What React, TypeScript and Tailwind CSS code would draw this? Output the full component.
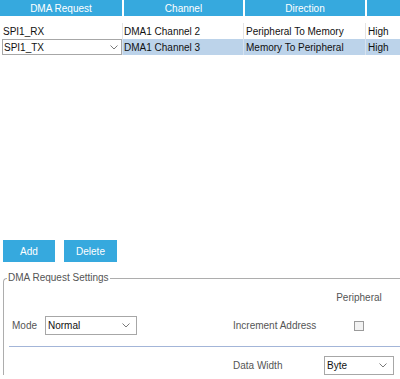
import React from 'react'

const font = { fontFamily: '"Liberation Sans", Arial, sans-serif' }

function Chevron() {
  return (
    <svg width="8" height="5" viewBox="0 0 8 5" className="shrink-0">
      <polyline points="0.5,0.5 4,4 7.5,0.5" fill="none" stroke="#7a7a7a" strokeWidth="1" />
    </svg>
  )
}

function Select({ value, width, className = '' }: { value: string; width: string; className?: string }) {
  return (
    <div
      className={`${width} h-[19px] flex items-center justify-between bg-white border border-[#a7a7a7] pl-[2px] pr-[6px] text-[10px] text-[#111] ${className}`}
    >
      <span>{value}</span>
      <Chevron />
    </div>
  )
}

const columns = ['DMA Request', 'Channel', 'Direction', '']

export default function App() {
  return (
    <div className="w-[400px] h-[379px] bg-white overflow-hidden" style={font}>
      {/* Table */}
      <div className="h-[240px]">
        <div className="grid grid-cols-[122px_119px_120px_1fr] gap-x-[2px] h-[16px]">
          {columns.map((c, i) => (
            <div key={i} className="bg-[#36a9de] text-white text-[10px] flex items-center justify-center">
              {c}
            </div>
          ))}
        </div>

        <div className="mt-[7px] grid grid-cols-[122px_121px_122px_1fr] h-[16px] text-[10px] text-[#111]">
          <div className="pl-[3px] flex items-center">SPI1_RX</div>
          <div className="pl-[1px] flex items-center border-l border-[#e4e4e4]">DMA1 Channel 2</div>
          <div className="pl-[2px] flex items-center border-l border-[#e4e4e4]">Peripheral To Memory</div>
          <div className="pl-[2px] flex items-center border-l border-[#e4e4e4]">High</div>
        </div>

        <div className="grid grid-cols-[122px_121px_122px_1fr] h-[16px] text-[10px] text-[#111] bg-[#bcd3ea]">
          <div className="bg-white pl-[2px]">
            <div className="h-[16px] w-[120px] flex items-center justify-between bg-white border border-[#a7a7a7] pl-[1px] pr-[3px]">
              <span>SPI1_TX</span>
              <Chevron />
            </div>
          </div>
          <div className="pl-[1px] flex items-center border-l border-[#d6e2ef]">DMA1 Channel 3</div>
          <div className="pl-[2px] flex items-center border-l border-[#d6e2ef]">Memory To Peripheral</div>
          <div className="pl-[2px] flex items-center border-l border-[#d6e2ef]">High</div>
        </div>
      </div>

      {/* Buttons */}
      <div className="flex gap-[9px] pl-[3px]">
        <button className="w-[52px] h-[22px] bg-[#36a9de] text-white text-[10px]">Add</button>
        <button className="w-[53px] h-[22px] bg-[#36a9de] text-white text-[10px]">Delete</button>
      </div>

      {/* Settings */}
      <fieldset className="mt-[10px] ml-[3px] w-[420px] border-t border-l border-[#adadad] rounded-tl-[4px]">
        <legend className="ml-[3px] px-[1px] text-[10px] leading-[12px] text-[#555]">DMA Request Settings</legend>

        <div className="grid grid-cols-[8px_33px_92px_96px_91px_70px] text-[10px] text-[#555]">
          <div className="col-start-6 h-[14px] mt-[6px] flex items-center justify-center">Peripheral</div>

          <div className="col-start-2 mt-[12px] h-[19px] flex items-center">Mode</div>
          <div className="mt-[12px]">
            <Select value="Normal" width="w-[92px]" />
          </div>
          <div className="col-start-5 mt-[12px] h-[19px] flex items-center">Increment Address</div>
          <div className="mt-[12px] h-[19px] flex items-center justify-center">
            <div className="w-[10px] h-[10px] border border-[#9a9a9a] bg-[#f2f2f2]" />
          </div>
        </div>

        <div className="mt-[11px] ml-[5px] h-px bg-[#a3b5d8]" />

        <div className="grid grid-cols-[8px_33px_92px_96px_91px_70px] text-[10px] text-[#555] mt-[9px]">
          <div className="col-start-5 h-[19px] flex items-center">Data Width</div>
          <div>
            <Select value="Byte" width="w-[70px]" />
          </div>
        </div>
      </fieldset>
    </div>
  )
}
